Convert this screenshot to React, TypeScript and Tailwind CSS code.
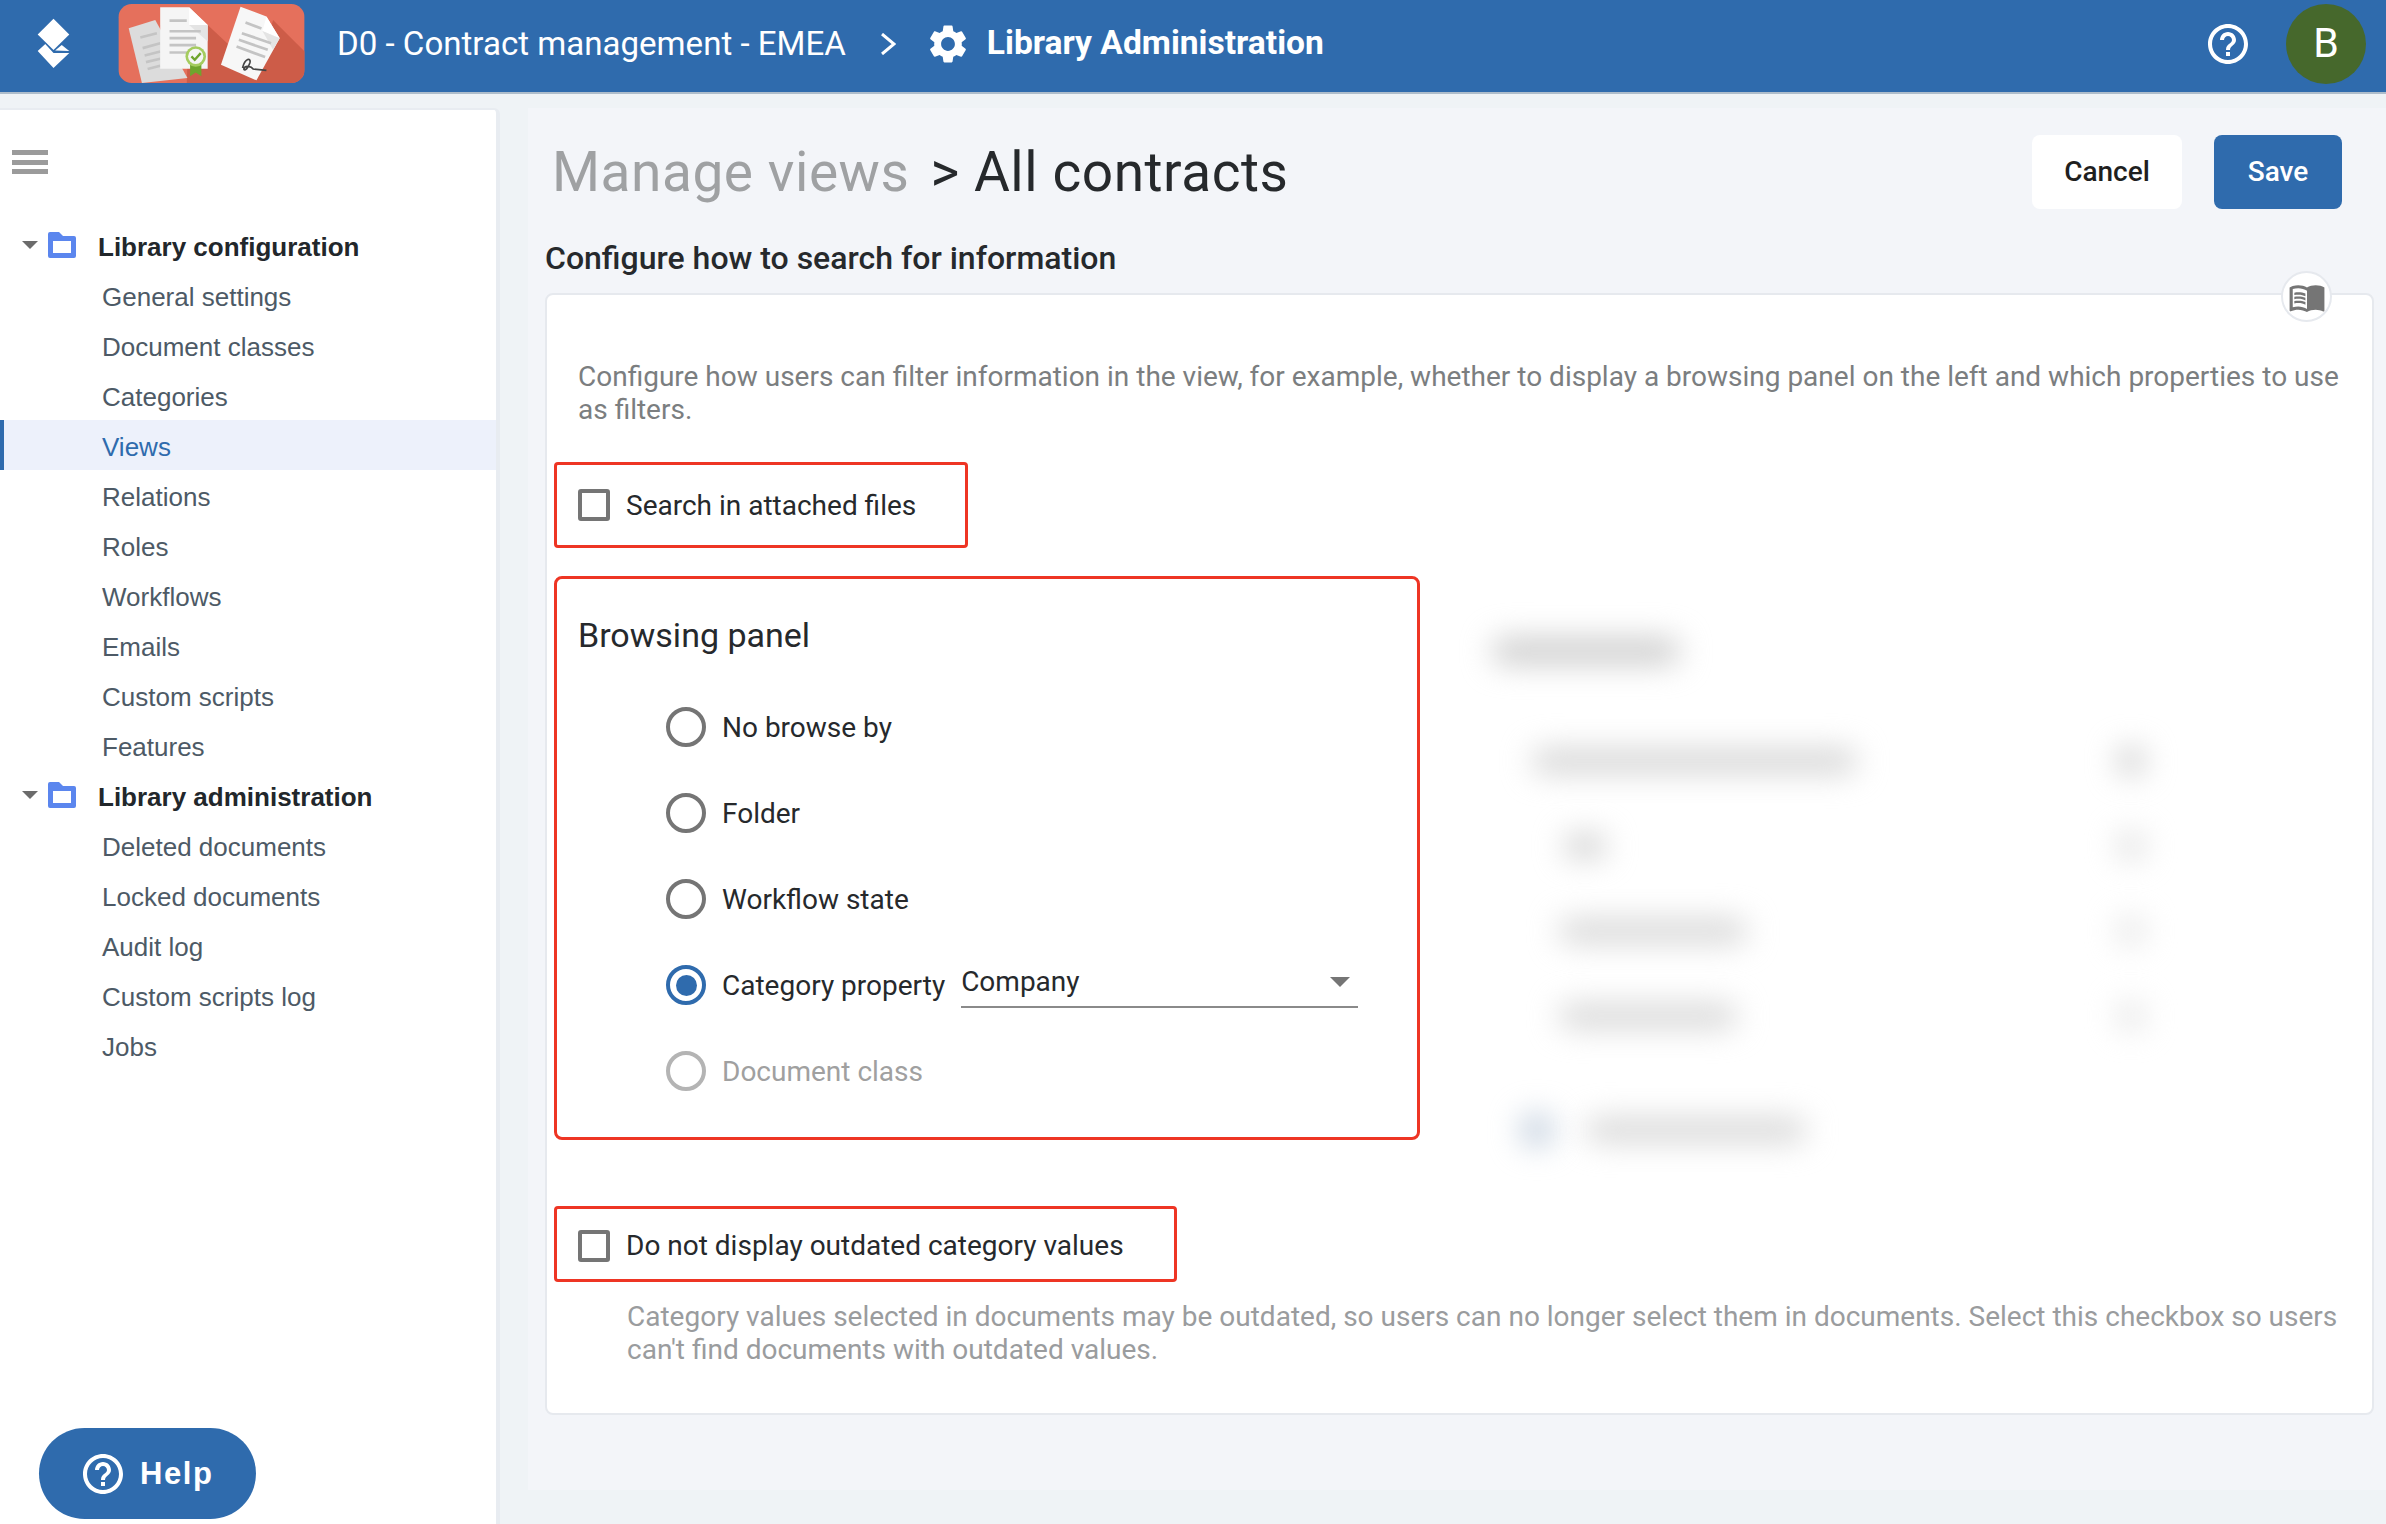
import { MdSettings, MdHelpOutline, MdOutlineMenuBook } from 'react-icons/md';

const configItems = ['General settings', 'Document classes', 'Categories', 'Views', 'Relations', 'Roles', 'Workflows', 'Emails', 'Custom scripts', 'Features'];
const adminItems = ['Deleted documents', 'Locked documents', 'Audit log', 'Custom scripts log', 'Jobs'];

function AppLogo() {
    return (
        <svg viewBox="24 12 561 238" className="w-[187px] h-[79px] shrink-0">
            <defs>
                <clipPath id="logoClip">
                    <rect x="24" y="12" width="561" height="238" rx="40" />
                </clipPath>
            </defs>
            <g clipPath="url(#logoClip)">
                <rect x="24" y="12" width="561" height="238" fill="#e5705c" />
                <polygon points="237,40 293,75 480,250 230,250" fill="#cd5c48" />
                <polygon points="490,60 585,155 585,250 470,250 440,240" fill="#cd5c48" />
                <polygon points="55,85 135,60 232,235 95,250" fill="#dcdcdc" />
                <g stroke="#c4c4c4" strokeWidth="8">
                    <line x1="90" y1="113" x2="140" y2="100" />
                    <line x1="97" y1="145" x2="150" y2="130" />
                    <line x1="103" y1="167" x2="150" y2="155" />
                    <line x1="107" y1="187" x2="150" y2="177" />
                    <line x1="112" y1="208" x2="150" y2="198" />
                </g>
                <polygon points="150,22 237,22 293,75 293,207 150,207" fill="#f5f5f5" />
                <polygon points="237,22 293,75 237,75" fill="#ffffff" />
                <polygon points="237,75 293,75 293,125" fill="#e4e4e4" />
                <g stroke="#c4c4c4" strokeWidth="8">
                    <line x1="178" y1="62" x2="230" y2="62" />
                    <line x1="178" y1="94" x2="272" y2="94" />
                    <line x1="178" y1="115" x2="258" y2="115" />
                    <line x1="178" y1="136" x2="258" y2="136" />
                    <line x1="178" y1="158" x2="235" y2="158" />
                </g>
                <polygon points="240,190 274,190 274,230 257,218 240,230" fill="#6fa52d" />
                <circle cx="257" cy="170" r="31" fill="#a5cc5f" />
                <circle cx="257" cy="170" r="23" fill="#f5f5f5" />
                <polyline points="244,170 254,180 272,160" fill="none" stroke="#6fa52d" strokeWidth="7" />
                <polygon points="392,20 470,50 510,115 440,242 333,195" fill="#f7f7f7" />
                <polygon points="470,50 510,115 458,93" fill="#ffffff" />
                <polygon points="458,93 510,115 490,150" fill="#e4e4e4" />
                <g stroke="#c4c4c4" strokeWidth="8">
                    <line x1="407" y1="68" x2="455" y2="86" />
                    <line x1="396" y1="100" x2="484" y2="130" />
                    <line x1="387" y1="120" x2="474" y2="150" />
                    <line x1="380" y1="140" x2="466" y2="172" />
                </g>
                <path d="M398 205 C405 175 425 172 420 190 C415 205 405 215 402 208 C405 195 425 200 430 208 L470 212" fill="none" stroke="#444444" strokeWidth="5" />
            </g>
        </svg>
    );
}

function BrandMark() {
    return (
        <svg viewBox="50 25 100 155" className="w-[33px] h-[51px] shrink-0" fill="#ffffff">
            <polygon points="100,27 148,75 100,122 52,75" />
            <polygon points="75,104 52,125 100,177 148,131 100,131" />
            <polygon points="105,124 125,107 148,125" />
        </svg>
    );
}

function FolderIcon() {
    return (
        <svg viewBox="0 0 28 26" className="ml-[10px] w-[28px] h-[26px] shrink-0" fill="#5b86ee">
            <path
                fillRule="evenodd"
                d="M2 0H11L15 4H26a2 2 0 0 1 2 2V24a2 2 0 0 1-2 2H2a2 2 0 0 1-2-2V2a2 2 0 0 1 2-2ZM5 9V21H23V9Z"
            />
        </svg>
    );
}

function Radio({ label, selected, disabled }: { label?: string; selected?: boolean; disabled?: boolean }) {
    const ring = selected ? 'border-[#2f6bad]' : disabled ? 'border-[#b4b4b4]' : 'border-[#757575]';
    return (
        <div className="flex items-center h-[86px]">
            <div className={`w-[40px] h-[40px] rounded-full border-[4px] flex items-center justify-center shrink-0 ${ring}`}>
                {selected && <div className="w-[21px] h-[21px] rounded-full bg-[#2f6bad]" />}
            </div>
            {label && <span className={`ml-[16px] pt-[2px] text-[28px] ${disabled ? 'text-[#a0a0a0]' : 'text-[#26292c]'}`}>{label}</span>}
        </div>
    );
}

function CheckRow({ label, className }: { label: string; className: string }) {
    return (
        <div className={`flex items-center border-[3px] border-[#ee3524] rounded-[4px] pl-[21px] ${className}`}>
            <div className="w-[32px] h-[32px] rounded-[3px] border-[4px] border-[#757575] shrink-0" />
            <span className="ml-[16px] pt-[1px] text-[28px] text-[#26292c]">{label}</span>
        </div>
    );
}

function SideGroup({ title, items }: { title: string; items: string[] }) {
    return (
        <div>
            <div className="flex items-center h-[50px] pl-[22px]">
                <div className="w-0 h-0 border-x-[8px] border-x-transparent border-t-[8px] border-t-[#6b6b6b] shrink-0" />
                <FolderIcon />
                <span className="ml-[22px] pt-[4px] text-[26px] font-bold text-[#22272b]">{title}</span>
            </div>
            {items.map((item) => {
                const active = item === 'Views';
                return (
                    <div
                        key={item}
                        className={`flex items-center h-[50px] pt-[4px] text-[26px] ${active ? 'bg-[#edf1fb] text-[#2f6bad] border-l-[4px] border-[#2f6bad] pl-[98px]' : 'text-[#4d5a66] pl-[102px]'}`}
                    >
                        {item}
                    </div>
                );
            })}
        </div>
    );
}

function BlurBar({ className }: { className: string }) {
    return <div className={`rounded-full blur-[15px] ${className}`} />;
}

function BlurredFilters() {
    return (
        <div className="flex-1 h-[564px] ml-[72px] pt-[62px] pr-[227px]">
            <BlurBar className="w-[188px] h-[26px] bg-[#cccccc]" />
            <div className="mt-[85px] flex flex-col gap-[61px] pl-[40px]">
                <div className="flex items-center justify-between h-[24px]">
                    <BlurBar className="w-[325px] h-[24px] bg-[#d4d4d4]" />
                    <BlurBar className="w-[28px] h-[28px] bg-[#cccccc]" />
                </div>
                <div className="flex items-center justify-between h-[24px]">
                    <BlurBar className="ml-[32px] w-[42px] h-[24px] bg-[#d0d0d0]" />
                    <BlurBar className="w-[28px] h-[28px] bg-[#dedede]" />
                </div>
                <div className="flex items-center justify-between h-[24px]">
                    <BlurBar className="ml-[27px] w-[188px] h-[24px] bg-[#d6d6d6]" />
                    <BlurBar className="w-[28px] h-[28px] bg-[#e4e4e4]" />
                </div>
                <div className="flex items-center justify-between h-[24px]">
                    <BlurBar className="ml-[27px] w-[178px] h-[24px] bg-[#d6d6d6]" />
                    <BlurBar className="w-[28px] h-[28px] bg-[#e4e4e4]" />
                </div>
            </div>
            <div className="mt-[85px] pl-[28px] flex items-center">
                <BlurBar className="w-[34px] h-[34px] bg-[#c4d0de]" />
                <BlurBar className="ml-[32px] w-[220px] h-[24px] bg-[#d6d6d6]" />
            </div>
        </div>
    );
}

export default function App() {
    return (
        <div className="relative w-[2386px] h-[1524px] overflow-hidden bg-[#eff3f6] font-['Roboto',sans-serif] flex flex-col">
            {/* Top bar */}
            <header className="h-[94px] shrink-0 bg-[#2f6bad] border-b-[2px] border-[#aebdcb] flex items-center pl-[37px] pr-[20px] pb-[5px] text-white">
                <BrandMark />
                <div className="ml-[48px]"><AppLogo /></div>
                <span className="ml-[32px] text-[33.1px]">D0 - Contract management - EMEA</span>
                <svg viewBox="0 0 16 22" className="ml-[34px] w-[16px] h-[22px] shrink-0" fill="none" stroke="#ffffff" strokeWidth="3">
                    <polyline points="2,1 14,11 2,21" />
                </svg>
                <MdSettings className="ml-[29px] w-[46px] h-[46px] shrink-0" />
                <span className="ml-[16px] text-[33.6px] font-bold">Library Administration</span>
                <MdHelpOutline className="ml-auto w-[48px] h-[48px]" />
                <div className="ml-[34px] w-[80px] h-[80px] rounded-full bg-[#46682c] flex items-center justify-center text-[41px]">B</div>
            </header>

            <div className="flex-1 flex min-h-0 pt-[14px]">
                {/* Sidebar */}
                <aside className="w-[500px] shrink-0 bg-white border-r-[4px] border-t-[2px] border-[#e8ecf1] rounded-tr-[6px] pt-[40px] font-['Liberation_Sans',sans-serif]">
                    <div className="ml-[12px] w-[36px] h-[24px] flex flex-col justify-between">
                        <div className="h-[5px] bg-[#9b9b9b]" />
                        <div className="h-[5px] bg-[#9b9b9b]" />
                        <div className="h-[5px] bg-[#9b9b9b]" />
                    </div>
                    <div className="mt-[46px]">
                        <SideGroup title="Library configuration" items={configItems} />
                        <SideGroup title="Library administration" items={adminItems} />
                    </div>
                </aside>

                {/* Main panel */}
                <main className="ml-[28px] flex-1 h-[1382px] bg-[#f3f5f9] pl-[17px] pr-[12px]">
                    <div className="flex items-start justify-between h-[149px] pl-[7px] pr-[32px] pt-[27px]">
                        <h1 className="text-[55px] leading-[74px] text-[#9fa1a3] tracking-[0.01em]">
                            Manage views
                            <span className="ml-[21px] text-[#26292c]">&gt; All contracts</span>
                        </h1>
                        <div className="flex gap-[32px]">
                            <button className="w-[150px] h-[74px] rounded-[8px] bg-white text-[28px] font-medium text-[#1f1f1f]">Cancel</button>
                            <button className="w-[128px] h-[74px] rounded-[8px] bg-[#2f6bad] text-[28px] font-medium text-white">Save</button>
                        </div>
                    </div>
                    <h2 className="-mt-[21px] h-[57px] text-[32px] leading-[44px] font-medium text-[#26292c]">Configure how to search for information</h2>

                    <section className="relative h-[1122px] bg-white border-[2px] border-[#e6e9ee] rounded-[8px] pt-[65px]">
                        <div className="absolute -top-[24px] right-[40px] w-[51px] h-[51px] rounded-full bg-white border-[2px] border-[#e6e9ee] flex items-center justify-center">
                            <MdOutlineMenuBook className="w-[38px] h-[38px] text-[#757575] -scale-x-100" />
                        </div>
                        <p className="ml-[31px] mr-[16px] text-[28px] leading-[33px] text-[#7b7e80]">
                            Configure how users can filter information in the view, for example, whether to display a browsing panel on the left and which properties to use as filters.
                        </p>
                        <CheckRow label="Search in attached files" className="ml-[7px] mt-[36px] w-[414px] h-[86px]" />
                        <div className="mt-[28px] flex items-start">
                            <div className="ml-[7px] w-[866px] h-[564px] border-[3px] border-[#ee3524] rounded-[8px] pl-[21px]">
                                <div className="pt-[32px] text-[34px] leading-[48px] text-[#26292c]">Browsing panel</div>
                                <div className="pl-[88px] mt-[25px] relative">
                                    <Radio label="No browse by" />
                                    <Radio label="Folder" />
                                    <Radio label="Workflow state" />
                                    <div className="flex items-center">
                                        <Radio label="Category property" selected />
                                        <div className="ml-[16px] w-[397px] h-[50px] -mt-[4px] border-b-[2px] border-[#8a8a8a] flex items-center justify-between pr-[8px]">
                                            <span className="text-[28px] text-[#26292c]">Company</span>
                                            <div className="w-0 h-0 border-x-[10px] border-x-transparent border-t-[10px] border-t-[#757575]" />
                                        </div>
                                    </div>
                                    <Radio label="Document class" disabled />
                                </div>
                            </div>
                            <BlurredFilters />
                        </div>
                        <CheckRow label="Do not display outdated category values" className="ml-[7px] mt-[66px] w-[623px] h-[76px] pt-[3px]" />
                        <p className="ml-[80px] mr-[16px] mt-[18px] text-[28px] leading-[33px] text-[#9a9c9e]">
                            Category values selected in documents may be outdated, so users can no longer select them in documents. Select this checkbox so users can't find documents with outdated values.
                        </p>
                    </section>
                </main>
            </div>

            {/* Floating help button */}
            <button className="absolute left-[39px] top-[1428px] w-[217px] h-[91px] rounded-full bg-[#2f6bad] text-white flex items-center pl-[40px] font-['Liberation_Sans',sans-serif]">
                <MdHelpOutline className="w-[48px] h-[48px]" />
                <span className="ml-[13px] pt-[2px] text-[31px] font-bold tracking-[0.05em]">Help</span>
            </button>
        </div>
    );
}
